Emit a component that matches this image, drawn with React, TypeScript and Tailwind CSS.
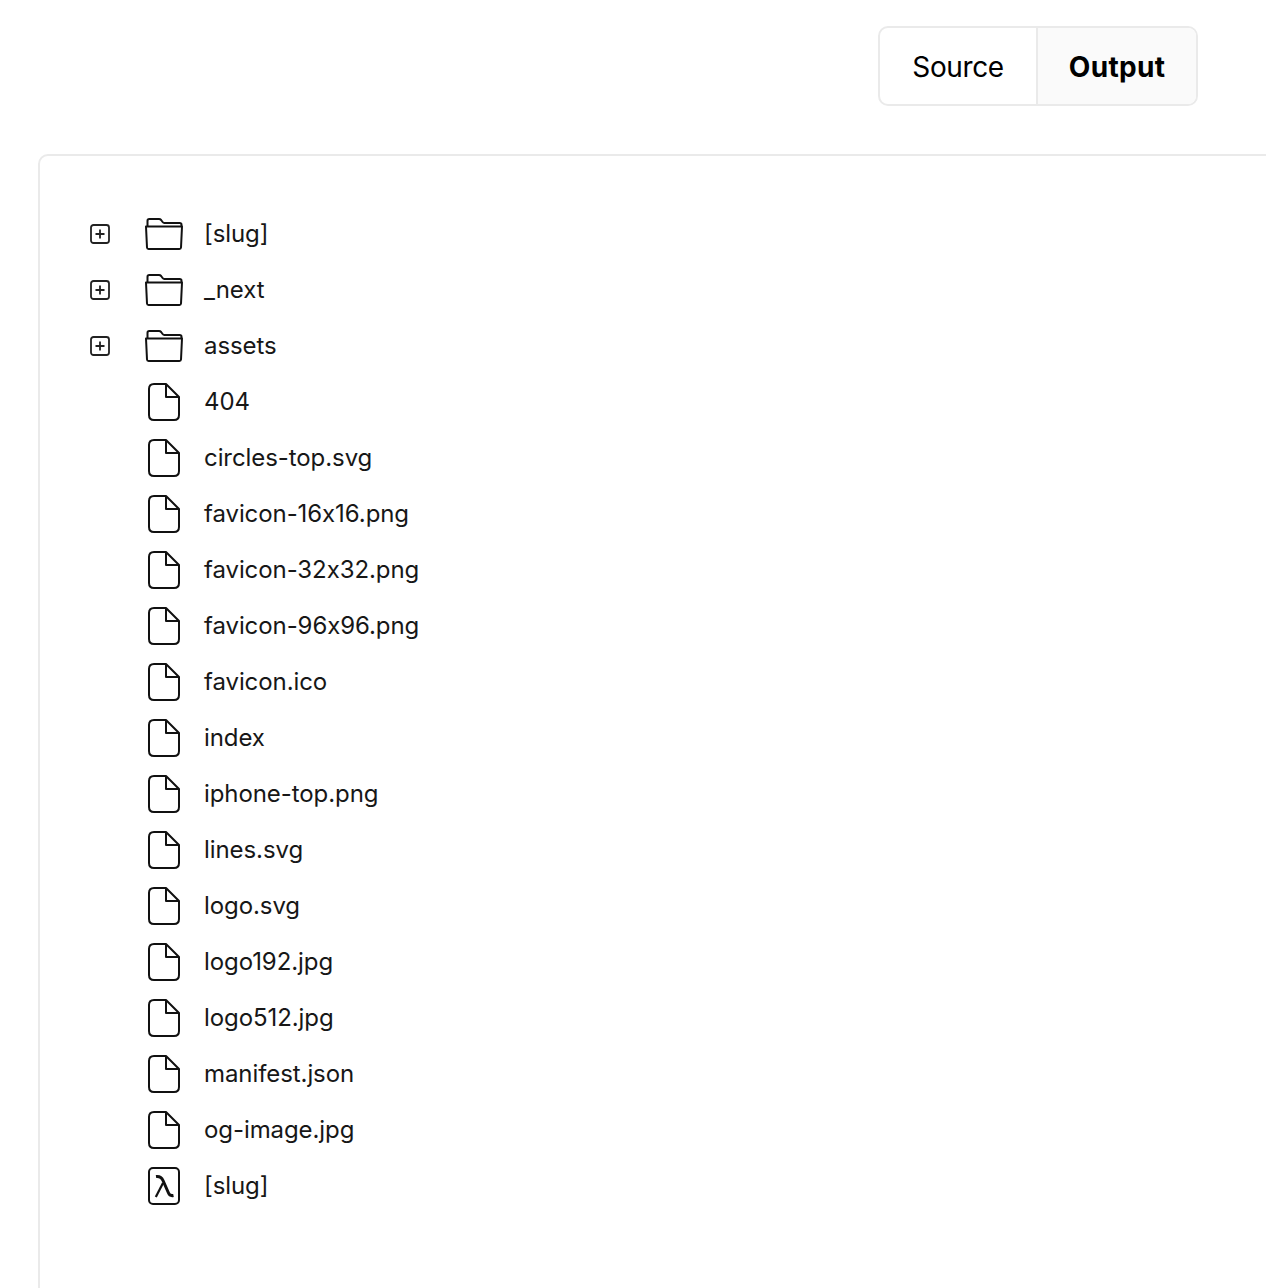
import * as React from "react"

const folders = ["[slug]", "_next", "assets"]
const files = [
  "404",
  "circles-top.svg",
  "favicon-16x16.png",
  "favicon-32x32.png",
  "favicon-96x96.png",
  "favicon.ico",
  "index",
  "iphone-top.png",
  "lines.svg",
  "logo.svg",
  "logo192.jpg",
  "logo512.jpg",
  "manifest.json",
  "og-image.jpg",
]

function PlusBox() {
  return (
    <svg width="20" height="20" viewBox="0 0 20 20" fill="none" stroke="#222" strokeWidth="1.8">
      <rect x="1" y="1" width="18" height="18" rx="2.5" />
      <path d="M10 5.5v9M5.5 10h9" />
    </svg>
  )
}

function FolderIcon() {
  return (
    <svg width="40" height="34" viewBox="0 0 40 34" fill="none" stroke="#111" strokeWidth="2" strokeLinejoin="round">
      <path d="M3.5 9.5V3.8C3.5 2.6 4.3 2 5.3 2H15C16 2 16.6 2.4 17.1 3L18.6 5C19.1 5.7 19.6 6 20.4 6H35.6C36.8 6 37.5 6.7 37.5 7.8V9.5" />
      <path d="M2 9.5H38L37 30.5C36.9 31.6 36.2 32 35.4 32H4.6C3.8 32 3.1 31.6 3 30.5L2 9.5Z" />
    </svg>
  )
}

function FileIcon() {
  return (
    <svg width="34" height="40" viewBox="0 0 34 40" fill="none" stroke="#111" strokeWidth="2" strokeLinejoin="round">
      <path d="M19 2H7C3.8 2 2 3.8 2 7V33C2 36.2 3.8 38 7 38H27C30.2 38 32 36.2 32 33V15L19 2Z" />
      <path d="M19 2V15H32" />
    </svg>
  )
}

function LambdaIcon() {
  return (
    <svg width="34" height="40" viewBox="0 0 34 40" fill="none" stroke="#111" strokeWidth="2">
      <rect x="2" y="2" width="30" height="36" rx="4" />
      <path d="M9 10.5C12.5 10 14.5 11 16 14.5L21.5 27C22.5 29.5 24 30 26.5 29.5" strokeWidth="3" />
      <path d="M16 17L8.8 31" strokeWidth="2.2" />
    </svg>
  )
}

function Row({ expand, icon, label }: { expand?: boolean; icon: React.ReactNode; label: string }) {
  return (
    <div className="flex h-14 items-center">
      <div className="flex w-5 justify-center">{expand && <PlusBox />}</div>
      <div className="ml-[34px] flex w-10 justify-center">{icon}</div>
      <span className="ml-[20px] text-2xl tracking-[-0.08px] text-[#171717]">{label}</span>
    </div>
  )
}

export default function App() {
  return (
    <div className="h-[1288px] w-[1266px] overflow-hidden bg-white font-['Inter',sans-serif] [font-feature-settings:'calt'_0]">
      <div className="flex justify-end pt-[26px] pr-[68px]">
        <div className="flex h-20 overflow-hidden rounded-[10px] border-2 border-[#eaeaea] text-[28px] text-black">
          <div className="flex w-[156px] items-center justify-center pt-[2px] tracking-[-0.4px]">Source</div>
          <div className="flex w-[160px] items-center justify-center border-l-2 border-[#eaeaea] bg-[#fafafa] pt-[2px] font-bold tracking-[0.3px]">
            Output
          </div>
        </div>
      </div>
      <div className="mt-12 ml-[38px] h-[1200px] w-[1300px] rounded-[10px] border-2 border-[#eaeaea] pt-[50px] pl-[50px]">
        {folders.map((name) => (
          <Row key={name} expand icon={<FolderIcon />} label={name} />
        ))}
        {files.map((name) => (
          <Row key={name} icon={<FileIcon />} label={name} />
        ))}
        <Row icon={<LambdaIcon />} label="[slug]" />
      </div>
    </div>
  )
}
